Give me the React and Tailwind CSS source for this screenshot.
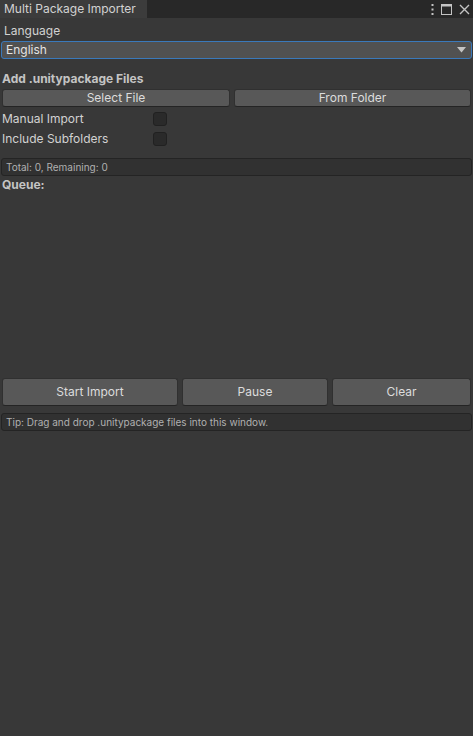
export default function App() {
  const font = { fontFamily: 'Inter, "Noto Sans", sans-serif' };
  const btn = "rounded-[3px] bg-[#585858] border border-[#303030] border-b-[#242424] text-[#dcdcdc] flex items-center justify-center";
  return (
    <div className="w-[473px] h-[736px] bg-[#383838] flex flex-col text-[12px] text-[#d2d2d2] overflow-hidden" style={font}>
      <div className="h-[18px] bg-[#282828] flex items-stretch shrink-0">
        <div className="w-[147px] bg-[#3c3c3c] px-[4px] flex items-center text-[12px] text-[#d2d2d2] leading-none">Multi Package Importer</div>
        <div className="flex-1" />
        <div className="flex items-center gap-[7px] pr-[3px]">
          <svg width="3" height="11" viewBox="0 0 3 11"><rect x="0.5" y="0" width="2" height="2" fill="#c4c4c4"/><rect x="0.5" y="4.5" width="2" height="2" fill="#c4c4c4"/><rect x="0.5" y="9" width="2" height="2" fill="#c4c4c4"/></svg>
          <svg width="11" height="11" viewBox="0 0 11 11"><rect x="0.5" y="0.5" width="10" height="10" fill="none" stroke="#c4c4c4" strokeWidth="1"/><rect x="0" y="0" width="11" height="2.5" fill="#c4c4c4"/></svg>
          <svg width="11" height="11" viewBox="0 0 11 11"><path d="M1 1 L10 10 M10 1 L1 10" stroke="#c4c4c4" strokeWidth="1.4"/></svg>
        </div>
      </div>
      <div className="flex flex-col px-[1px]">
        <div className="h-[14px] mt-[6px] pl-[3px] flex items-center">Language</div>
        <div className="mt-[3px] h-[18px] rounded-[3px] bg-[#515151] border border-[#3a79bb] flex items-center justify-between pl-[4px] pr-[5px] text-[#e4e4e4]">
          <span>English</span>
          <svg width="9" height="6" viewBox="0 0 9 6"><path d="M0 0 L9 0 L4.5 5.5 Z" fill="#c4c4c4"/></svg>
        </div>
        <div className="h-[14px] mt-[13px] pl-[1px] flex items-center font-bold text-[#c4c4c4]">Add .unitypackage Files</div>
        <div className="mt-[3px] flex gap-[4px] px-[1px]">
          <button className={"flex-1 h-[18px] " + btn}>Select File</button>
          <button className={"w-[237px] h-[18px] " + btn}>From Folder</button>
        </div>
        <div className="mt-[3px] h-[18px] flex items-center pl-[1px]">
          <span className="w-[151px]">Manual Import</span>
          <span className="w-[14px] h-[14px] rounded-[3px] bg-[#2a2a2a] border border-[#212121]" />
        </div>
        <div className="mt-[2px] h-[18px] flex items-center pl-[1px]">
          <span className="w-[151px]">Include Subfolders</span>
          <span className="w-[14px] h-[14px] rounded-[3px] bg-[#2a2a2a] border border-[#212121]" />
        </div>
        <div className="mt-[10px] h-[18px] rounded-[3px] bg-[#313131] border border-[#242424] flex items-center pl-[4px] text-[10px] text-[#b0b0b0]">Total: 0, Remaining: 0</div>
        <div className="h-[14px] mt-[2px] pl-[1px] flex items-center font-bold text-[#c4c4c4]">Queue:</div>
        <div className="h-[186px]" />
        <div className="flex gap-[4px] px-[1px]">
          <button className={"w-[176px] h-[28px] " + btn}>Start Import</button>
          <button className={"w-[146px] h-[28px] " + btn}>Pause</button>
          <button className={"flex-1 h-[28px] " + btn}>Clear</button>
        </div>
        <div className="mt-[7px] h-[18px] rounded-[3px] bg-[#313131] border border-[#242424] flex items-center pl-[4px] text-[10px] text-[#b0b0b0]">Tip: Drag and drop .unitypackage files into this window.</div>
      </div>
    </div>
  );
}
